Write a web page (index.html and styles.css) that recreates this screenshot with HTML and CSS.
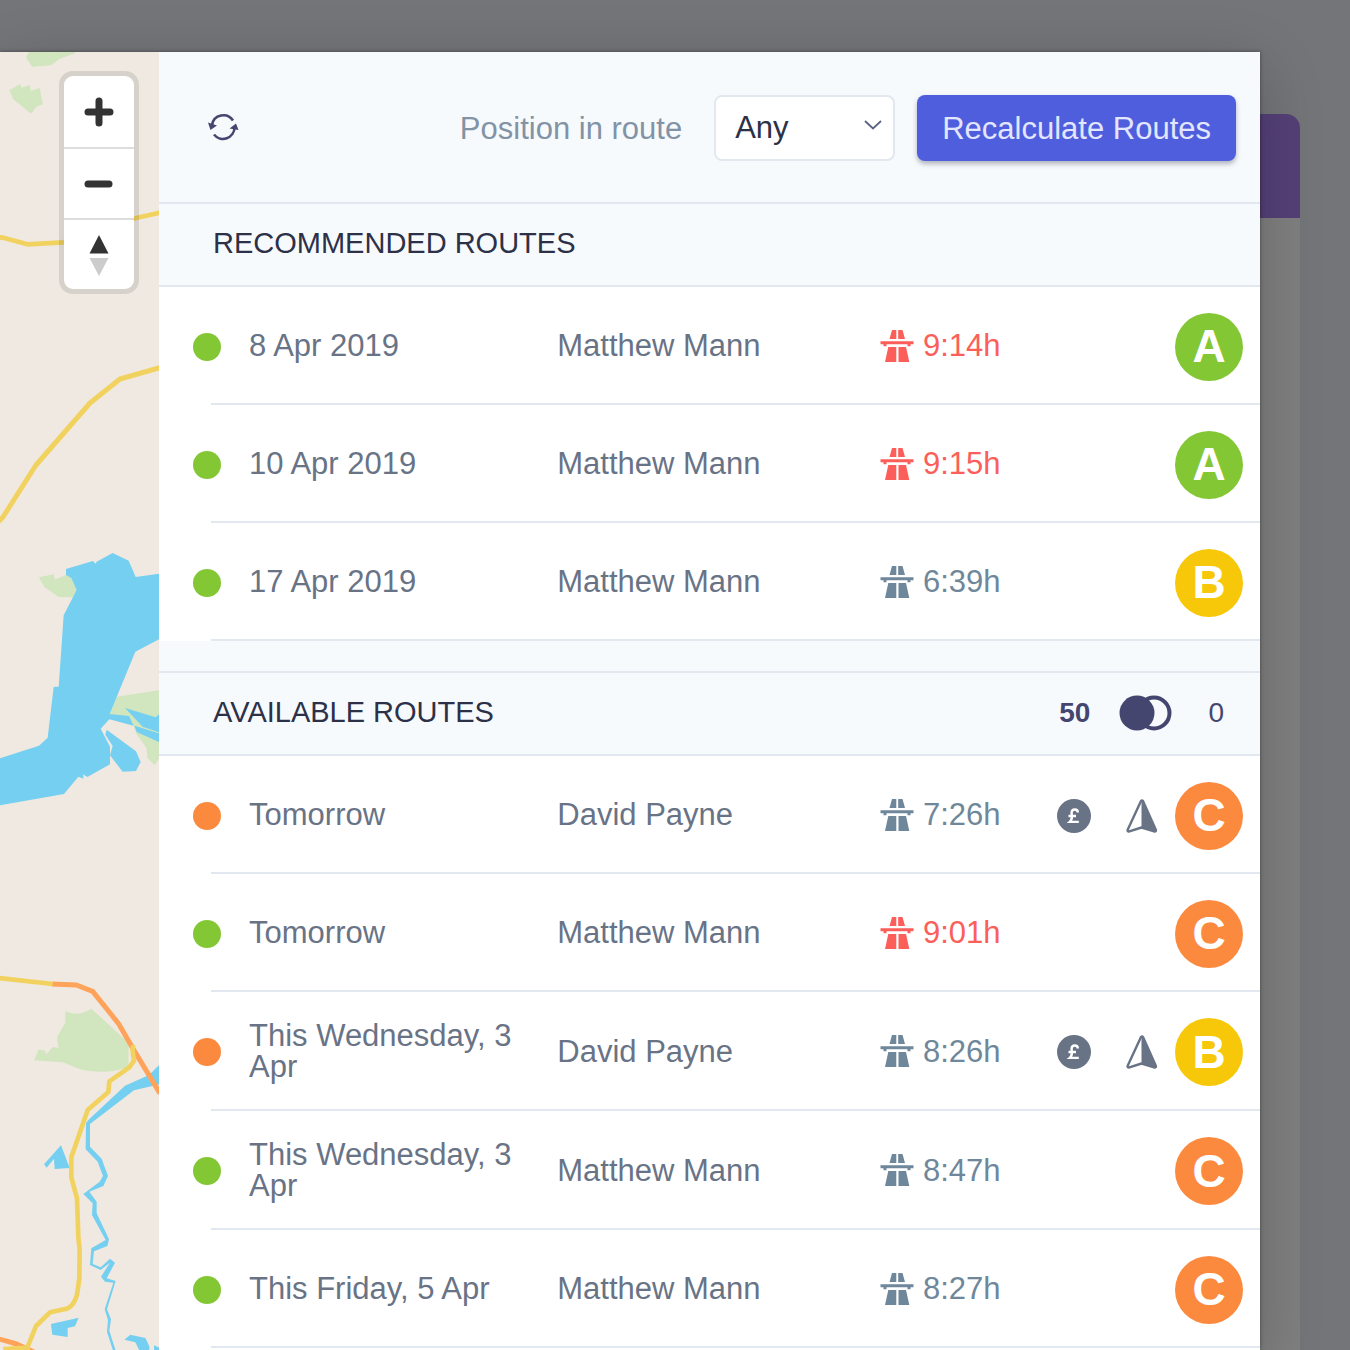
FILE: index.html
```html
<!DOCTYPE html>
<html lang="en">
<head>
<meta charset="utf-8">
<meta name="viewport" content="width=device-width, initial-scale=1">
<title>Routes</title>
<link rel="stylesheet" href="styles.css">
</head>
<body>
<svg class="sprite" aria-hidden="true">
  <symbol id="motorway" viewBox="0 0 34 34">
    <path d="M12 1h4.300v9H9.500zM18.200 1h4.300l2.500 9h-6.800zM.5 12.300h33v3h-3v2h-3v-2H6.500v2h-3v-2h-3zM8.300 18h8v15H5zM18.500 18h7.500l3.300 15H18.500z" fill="currentColor"/>
  </symbol>
  <symbol id="pound" viewBox="0 0 34 34">
    <circle cx="17" cy="17" r="17" fill="currentColor"/>
    <path d="M20.800 13.500c0-2-1.300-3-3-3-2 0-3.200 1.300-3.200 3.300 0 2.700.8 4.200-.2 6.700-.3.800-.8 1.700-1.600 2.400h9M11.500 17h7.500" fill="none" stroke="#fff" stroke-width="2.400"/>
  </symbol>
  <symbol id="compass" viewBox="0 0 32 34">
    <path d="M15 2 1.800 30.500c-.6 1.500.2 2.400 1.600 1.900L15.500 28.500l12.600 3.900c1.400.5 2.200-.4 1.600-1.900L17 2Q16 .8 15 2z" fill="none" stroke="currentColor" stroke-width="2.400" stroke-linejoin="round"/>
    <path d="M15.500 1.500v27l12.600 3.900c1.400.5 2.200-.4 1.600-1.900L17 2z" fill="currentColor"/>
  </symbol>
</svg>

<div class="backdrop-card" aria-hidden="true"><div class="backdrop-card-head"></div></div>

<main class="modal">
  <section class="map" aria-label="Map">
    <svg class="map-art" viewBox="0 52 159 1298" preserveAspectRatio="xMinYMin slice" aria-hidden="true">
      <g transform="translate(0 40) scale(.33333)">
        <path class="park" d="M90 30 78 52l18 28 57-4 25-19 47-17V30zM28 151l33-19 3 11 26-8 2 18 27-9 9 49-20 8-14 20-54-43z"/>
        <path class="road minor" d="M-6 592 10 593 82 613 190 607 405 535 480 518"/>
      </g>
      <path class="road minor" d="M-3 523 3 517 36 465 90 403 120 379 162 367"/>
      <g transform="translate(0 540) scale(.33333)">
        <path class="park" d="M117 112l45-9 2 16 35-15 16 8 17 38-12 22-44-1-42-29z"/>
        <path class="park" d="M350 470 480 450V650l-16 25-22-21-3-31-30-41-10-30-72-30z"/>
        <path class="water" d="M-3 656 117 617l26-24 18-152 15-1 7-98 8-116 39-76-16-36-16-9V87l81-24 8 8 3-6 48-26 48 23 21 49 74-10V296L406 335 329 522 387 528 401 557 328 538 302 566 330 620V673L262 711 250 703V716L235 710 192 762-3 796z"/>
        <path class="water" d="M375 504l92 28 13-12v58l-52-18zM403 557l77 24v26l-70-31zM320 569 408 634 422 666 408 693 368 695 330 646 338 618 316 584z"/>
      </g>
      <g transform="translate(0 960) scale(.33333)">
        <path class="park" d="M196 154q40 17 78-8l112 103-1 71q-60 25-140 9-30-10-56-22l-87-6 14-33 20 5 2 11 20-23 18 3-5-32 25-44z"/>
        <path class="water" d="M480 313 447 345 375 377 265 480 258 490 257 568 293 605 309 648 299 665 250 702 278 730 276 765 317 840 274 865 270 915 302 930 330 908 303 950 315 965 340 968 314 1048 324 1080 321 1115 340 1175H348L328 1112 333 1078 321 1048 347 963 320 955 345 908 330 896 302 922 278 912 282 874 322 858 327 838 290 760V725L268 695 310 678 324 648 305 596 270 560V492L402 391 480 373z"/>
        <path class="water" d="M132 613l51-57 26 68-45 3-2-31-22 27zM153 1092l83-19-11 26-22 5v27l-46-7zM373 1139l18-15 45 10 12 25v20h-26l-16-32zM462 1156l18 8v20h-18z"/>
        <path class="road major" d="M156 72 229 75 278 94 355 190 400 268 480 400M-6 1136 50 1152 110 1180"/>
        <path class="road minor" d="M-6 54 158 72M399 255 398 275 402 302 388 322 328 364 325 396 263 450 214 592 214 652 231 715 235 830 239 870 238 955 231 1005Q220 1040 200 1046L150 1057 108 1098 75 1180"/>
        <path class="road wide" d="M10 1172 90 1168"/>
      </g>
    </svg>
    <div class="map-controls">
      <button class="map-button" type="button" aria-label="Zoom in">
        <svg width="30" height="30" viewBox="0 0 30 30"><path d="M15 4v22M4 15h22" stroke="#333" stroke-width="7" stroke-linecap="round"/></svg>
      </button>
      <button class="map-button" type="button" aria-label="Zoom out">
        <svg width="30" height="30" viewBox="0 0 30 30"><path d="M4 15h21" stroke="#333" stroke-width="7" stroke-linecap="round"/></svg>
      </button>
      <button class="map-button" type="button" aria-label="Reset north">
        <svg width="30" height="44" viewBox="0 0 30 44"><path d="M15 2l9.500 18.500h-19z" fill="#333"/><path d="M15 43l9.500-18h-19z" fill="#ccc"/></svg>
      </button>
    </div>
  </section>

  <section class="panel">
    <header class="toolbar">
      <button class="icon-button" type="button" aria-label="Refresh">
        <svg width="32" height="30" viewBox="0 0 32 30" fill="none" stroke="#45466f" stroke-width="2.600"><path d="M5 12A11.500 11.500 0 0 1 26 7.500M27.500 14.500A11.500 11.500 0 0 1 7 21.500"/><path d="M1 9.500l9 3-6.500 4.500zM31.500 17l-9-1.500 6.500-5z" fill="#45466f" stroke="none"/></svg>
      </button>
      <label class="toolbar-label" for="position">Position in route</label>
      <div class="select">
        <select id="position"><option>Any</option><option>First</option><option>Last</option></select>
        <svg class="select-arrow" width="18" height="10" viewBox="0 0 18 10" aria-hidden="true"><path d="M1 1l8 7.500L17 1" fill="none" stroke="#5b6384" stroke-width="1.800"/></svg>
      </div>
      <button class="primary" type="button">Recalculate Routes</button>
    </header>

    <div class="section-head"><h2>RECOMMENDED ROUTES</h2></div>
    <table class="routes">
      <colgroup><col class="c-status"><col class="c-date"><col><col class="c-time"><col class="c-flags"><col class="c-grade"></colgroup>
      <tbody>
        <tr><td><span class="dot green"></span></td><td>8 Apr 2019</td><td>Matthew Mann</td><td><span class="time late"><svg><use href="#motorway"/></svg>9:14h</span></td><td></td><td><span class="grade green">A</span></td></tr>
        <tr><td><span class="dot green"></span></td><td>10 Apr 2019</td><td>Matthew Mann</td><td><span class="time late"><svg><use href="#motorway"/></svg>9:15h</span></td><td></td><td><span class="grade green">A</span></td></tr>
        <tr><td><span class="dot green"></span></td><td>17 Apr 2019</td><td>Matthew Mann</td><td><span class="time"><svg><use href="#motorway"/></svg>6:39h</span></td><td></td><td><span class="grade yellow">B</span></td></tr>
      </tbody>
    </table>

    <div class="spacer"></div>
    <div class="section-head">
      <h2>AVAILABLE ROUTES</h2>
      <div class="counts">
        <strong>50</strong>
        <button class="icon-button" type="button" aria-label="Toggle available routes">
          <svg width="53" height="36" viewBox="0 0 53 36"><circle cx="35" cy="18" r="15.500" fill="#f7f9fc" stroke="#45466f" stroke-width="4"/><circle cx="18" cy="18" r="17.500" fill="#45466f"/></svg>
        </button>
        <span>0</span>
      </div>
    </div>
    <table class="routes">
      <colgroup><col class="c-status"><col class="c-date"><col><col class="c-time"><col class="c-flags"><col class="c-grade"></colgroup>
      <tbody>
        <tr><td><span class="dot orange"></span></td><td>Tomorrow</td><td>David Payne</td><td><span class="time"><svg><use href="#motorway"/></svg>7:26h</span></td><td><span class="flags"><svg><use href="#pound"/></svg><svg><use href="#compass"/></svg></span></td><td><span class="grade orange">C</span></td></tr>
        <tr><td><span class="dot green"></span></td><td>Tomorrow</td><td>Matthew Mann</td><td><span class="time late"><svg><use href="#motorway"/></svg>9:01h</span></td><td></td><td><span class="grade orange">C</span></td></tr>
        <tr><td><span class="dot orange"></span></td><td>This Wednesday, 3 Apr</td><td>David Payne</td><td><span class="time"><svg><use href="#motorway"/></svg>8:26h</span></td><td><span class="flags"><svg><use href="#pound"/></svg><svg><use href="#compass"/></svg></span></td><td><span class="grade yellow">B</span></td></tr>
        <tr><td><span class="dot green"></span></td><td>This Wednesday, 3 Apr</td><td>Matthew Mann</td><td><span class="time"><svg><use href="#motorway"/></svg>8:47h</span></td><td></td><td><span class="grade orange">C</span></td></tr>
        <tr><td><span class="dot green"></span></td><td>This Friday, 5 Apr</td><td>Matthew Mann</td><td><span class="time"><svg><use href="#motorway"/></svg>8:27h</span></td><td></td><td><span class="grade orange">C</span></td></tr>
      </tbody>
    </table>
  </section>
</main>
</body>
</html>
```
FILE: styles.css
```css
* { box-sizing: border-box; }

body {
  margin: 0;
  min-height: 100vh;
  position: relative;
  padding: 52px 90px 0 0;
  background: #747578;
  color: #697386;
  font-family: "Liberation Sans", Arial, sans-serif;
  font-size: 31px;
  line-height: 31px;
}

button, select { font: inherit; margin: 0; }
button { cursor: pointer; }
svg { display: block; }
.sprite { position: absolute; width: 0; height: 0; }

.backdrop-card {
  position: absolute;
  top: 114px;
  right: 50px;
  bottom: 0;
  left: 0;
  background: #7f7f7f;
  border-radius: 14px 14px 0 0;
  overflow: hidden;
}
.backdrop-card-head { height: 104px; background: #554077; }

.modal {
  position: relative;
  display: flex;
  min-height: calc(100vh - 52px);
  background: #fff;
  box-shadow: 0 0 4px rgba(0, 0, 0, .4), 0 16px 60px rgba(0, 0, 0, .2);
  clip-path: inset(-52px -90px 0 0);
}

/* Map */
.map {
  position: relative;
  flex: 0 0 159px;
  background: #efe9e1;
  overflow: hidden;
}
.map-art { position: absolute; inset: 0; width: 100%; height: 100%; }
.park { fill: #d1e6be; }
.water { fill: #74cff0; }
.road { fill: none; stroke-linejoin: round; }
.minor { stroke: #f2d25f; stroke-width: 14px; }
.map-art > .minor { stroke-width: 5px; }
.major { stroke: #ffa35a; stroke-width: 15px; }
.wide { stroke: #f2d25f; stroke-width: 24px; }

.map-controls {
  position: absolute;
  top: 19px;
  right: 20px;
  width: 80px;
  border: 5px solid rgba(0, 0, 0, .1);
  border-radius: 14px;
  background: #fff padding-box;
  overflow: hidden;
}
.map-button {
  display: flex;
  align-items: center;
  justify-content: center;
  width: 100%;
  height: 71px;
  padding: 0;
  border: 0;
  background: none;
}
.map-button + .map-button { border-top: 2px solid #ddd; }

/* Panel */
.panel { flex: 1; min-width: 0; }

.toolbar {
  display: flex;
  align-items: center;
  height: 152px;
  padding: 2px 24px 0 48px;
  border-bottom: 2px solid #e2e8f0;
  background: #f7fafd;
}
.icon-button { padding: 0; border: 0; background: none; }
.toolbar-label { margin: 0 32px 0 auto; color: #8293a6; }

.select { display: grid; align-items: center; margin-right: 22px; }
.select select, .select-arrow { grid-area: 1 / 1; }
.select select {
  appearance: none;
  width: 181px;
  height: 66px;
  padding: 0 44px 0 19px;
  border: 2px solid #e2e8f0;
  border-radius: 8px;
  background: #fff;
  color: #2d3148;
  line-height: 40px;
}
.select-arrow { justify-self: end; margin: 0 13px 6px 0; pointer-events: none; }

.primary {
  height: 66px;
  padding: 0 25px;
  border: 0;
  border-radius: 8px;
  background: #4f5edd;
  color: #e3e6ff;
  white-space: nowrap;
  box-shadow: 0 3px 5px rgba(40, 45, 70, .35);
}

.section-head {
  display: flex;
  align-items: center;
  justify-content: space-between;
  height: 83px;
  padding: 0 36px 2px 54px;
  border-bottom: 2px solid #e2e8f0;
  background: #f7fafd;
}
h2 { margin: 0; font-size: 29px; font-weight: 400; color: #2d3148; }
.counts { display: flex; align-items: center; gap: 29px; font-size: 28px; color: #45466f; }
.counts span { margin-left: 7px; }
.spacer { height: 32px; border-bottom: 2px solid #e2e8f0; background: #f7fafd; }

.routes { width: 100%; table-layout: fixed; border-collapse: collapse; }
.c-status { width: 90px; }
.c-date { width: 28%; }
.c-time { width: 177px; }
.c-flags { width: 118px; }
.c-grade { width: 85px; }
.routes tr {
  background: linear-gradient(#e2e8f0, #e2e8f0) right bottom / calc(100% - 52px) 2px no-repeat;
}
.routes td { height: 118px; padding: 28px 0 29px; vertical-align: middle; }
.routes td:nth-child(2) { padding-right: 24px; }
.routes td:first-child { padding-left: 34px; }
.routes td:first-child, .routes td:nth-child(5) { padding-top: 29px; padding-bottom: 28px; }
.routes td:last-child { padding-top: 19px; padding-bottom: 18px; }

.dot { display: block; width: 28px; height: 28px; border-radius: 50%; }
.green { background: #84c735; }
.yellow { background: #f7c80a; }
.orange { background: #fb8a3f; }

.time { display: flex; align-items: center; gap: 9px; color: #6f879a; }
.time svg { width: 34px; height: 34px; }
.late { color: #fc5e59; }

.flags { display: flex; align-items: center; gap: 34px; }
.flags svg { width: 34px; height: 34px; }

.grade {
  display: flex;
  align-items: center;
  justify-content: center;
  width: 68px;
  height: 68px;
  border-radius: 50%;
  color: #fff;
  font-size: 46px;
  font-weight: 700;
}
```
